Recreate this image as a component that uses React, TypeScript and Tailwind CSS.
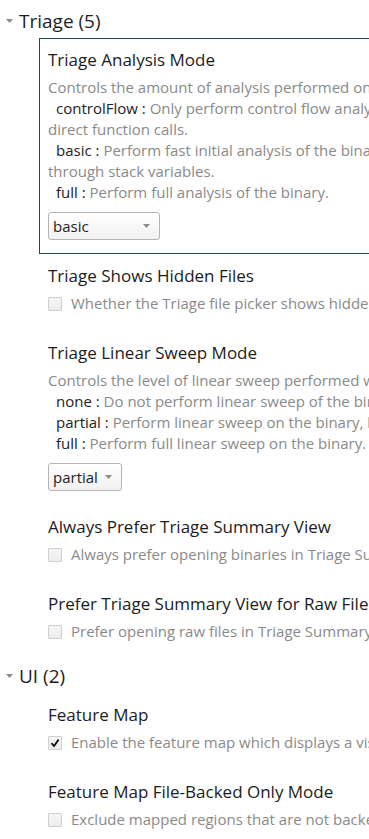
import React from "react";

const font = { fontFamily: '"Open Sans", "Noto Sans", sans-serif' };

// small grey disclosure triangle
const Caret = ({ className = "" }: { className?: string }) => (
  <svg width="7" height="4" viewBox="0 0 7 4" className={className}>
    <path d="M0 0 L7 0 L3.5 4 Z" fill="#8c8c8c" />
  </svg>
);

const SectionHeader = ({ label, h }: { label: string; h: string }) => (
  <div className={`flex items-center ${h}`}>
    <Caret className="ml-[6px] mr-[6px]" />
    <span className="text-[19px] leading-[26px] text-[#1e1e1e]">{label}</span>
  </div>
);

const Title = ({ children }: { children: React.ReactNode }) => (
  <div className="text-[17px] leading-[24px] text-[#1c1c1c] whitespace-nowrap">{children}</div>
);

const Key = ({ k, text }: { k: string; text: string }) => (
  <>
    <span className="ml-[8px] text-[#222]">{k} :</span> {text}
  </>
);

const Checkbox = ({ checked = false }: { checked?: boolean }) => (
  <span className="inline-flex items-center justify-center w-[14px] h-[14px] border border-[#cfcfcf] rounded-[1px] bg-gradient-to-b from-[#f6f6f6] to-[#ececec] mr-[9px] shrink-0">
    {checked && (
      <svg width="10" height="10" viewBox="0 0 10 10">
        <path d="M1.5 5.2 L4 8 L8.6 1.6" fill="none" stroke="#111" strokeWidth="1.8" />
      </svg>
    )}
  </span>
);

const CheckRow = ({ text, checked }: { text: string; checked?: boolean }) => (
  <div className="flex items-center mt-[5px] text-[15px] leading-[21px] text-[#8a8a8a] whitespace-nowrap">
    <Checkbox checked={checked} />
    {text}
  </div>
);

const Select = ({ value, width }: { value: string; width: string }) => (
  <div
    className={`flex items-center justify-between mt-[9px] h-[28px] ${width} border border-[#b4b4b4] rounded-[3px] bg-gradient-to-b from-white to-[#f1f1f1] pl-[4px] pr-[9px] text-[15px] text-[#1e1e1e]`}
  >
    <span>{value}</span>
    <Caret />
  </div>
);

const Item = ({ selected = false, children, pb = "pb-[16px]" }: { selected?: boolean; children: React.ReactNode; pb?: string }) => (
  <div className={`border ${selected ? "border-[#1f4b50]" : "border-transparent"} pl-2 pt-[9px] ${pb}`}>
    {children}
  </div>
);

const Desc = ({ children }: { children: React.ReactNode }) => (
  <div className="mt-[5px] text-[15px] leading-[21px] text-[#8a8a8a] whitespace-nowrap">{children}</div>
);

export default function App() {
  return (
    <div className="w-[369px] h-[839px] overflow-hidden bg-white" style={font}>
      <SectionHeader label="Triage (5)" h="h-[38px] pt-[3px]" />
      <div className="ml-[39px] w-[640px]">
        <Item selected pb="pb-[13px]">
          <Title>Triage Analysis Mode</Title>
          <Desc>
            Controls the amount of analysis performed on functions when opening for triage.
            <br />
            <Key k="controlFlow" text="Only perform control flow analysis on the binary. Cross references are valid only for" />
            <br />
            direct function calls.
            <br />
            <Key k="basic" text="Perform fast initial analysis of the binary. This mode does not analyze types or data flow" />
            <br />
            through stack variables.
            <br />
            <Key k="full" text="Perform full analysis of the binary." />
          </Desc>
          <Select value="basic" width="w-[112px]" />
        </Item>
        <Item>
          <Title>Triage Shows Hidden Files</Title>
          <CheckRow text="Whether the Triage file picker shows hidden files." />
        </Item>
        <Item pb="pb-[13px]">
          <Title>Triage Linear Sweep Mode</Title>
          <Desc>
            Controls the level of linear sweep performed when opening for triage.
            <br />
            <Key k="none" text="Do not perform linear sweep of the binary." />
            <br />
            <Key k="partial" text="Perform linear sweep on the binary, but skip the control flow graph analysis phase." />
            <br />
            <Key k="full" text="Perform full linear sweep on the binary." />
          </Desc>
          <Select value="partial" width="w-[74px]" />
        </Item>
        <Item>
          <Title>Always Prefer Triage Summary View</Title>
          <CheckRow text="Always prefer opening binaries in Triage Summary view, even when performing full analysis." />
        </Item>
        <Item>
          <Title>Prefer Triage Summary View for Raw Files</Title>
          <CheckRow text="Prefer opening raw files in Triage Summary view." />
        </Item>
      </div>
      <SectionHeader label="UI (2)" h="h-[34px]" />
      <div className="ml-[39px] w-[640px]">
        <Item>
          <Title>Feature Map</Title>
          <CheckRow checked text="Enable the feature map which displays a visual overview of the BinaryView." />
        </Item>
        <Item>
          <Title>Feature Map File-Backed Only Mode</Title>
          <CheckRow text="Exclude mapped regions that are not backed by a load file." />
        </Item>
      </div>
    </div>
  );
}
